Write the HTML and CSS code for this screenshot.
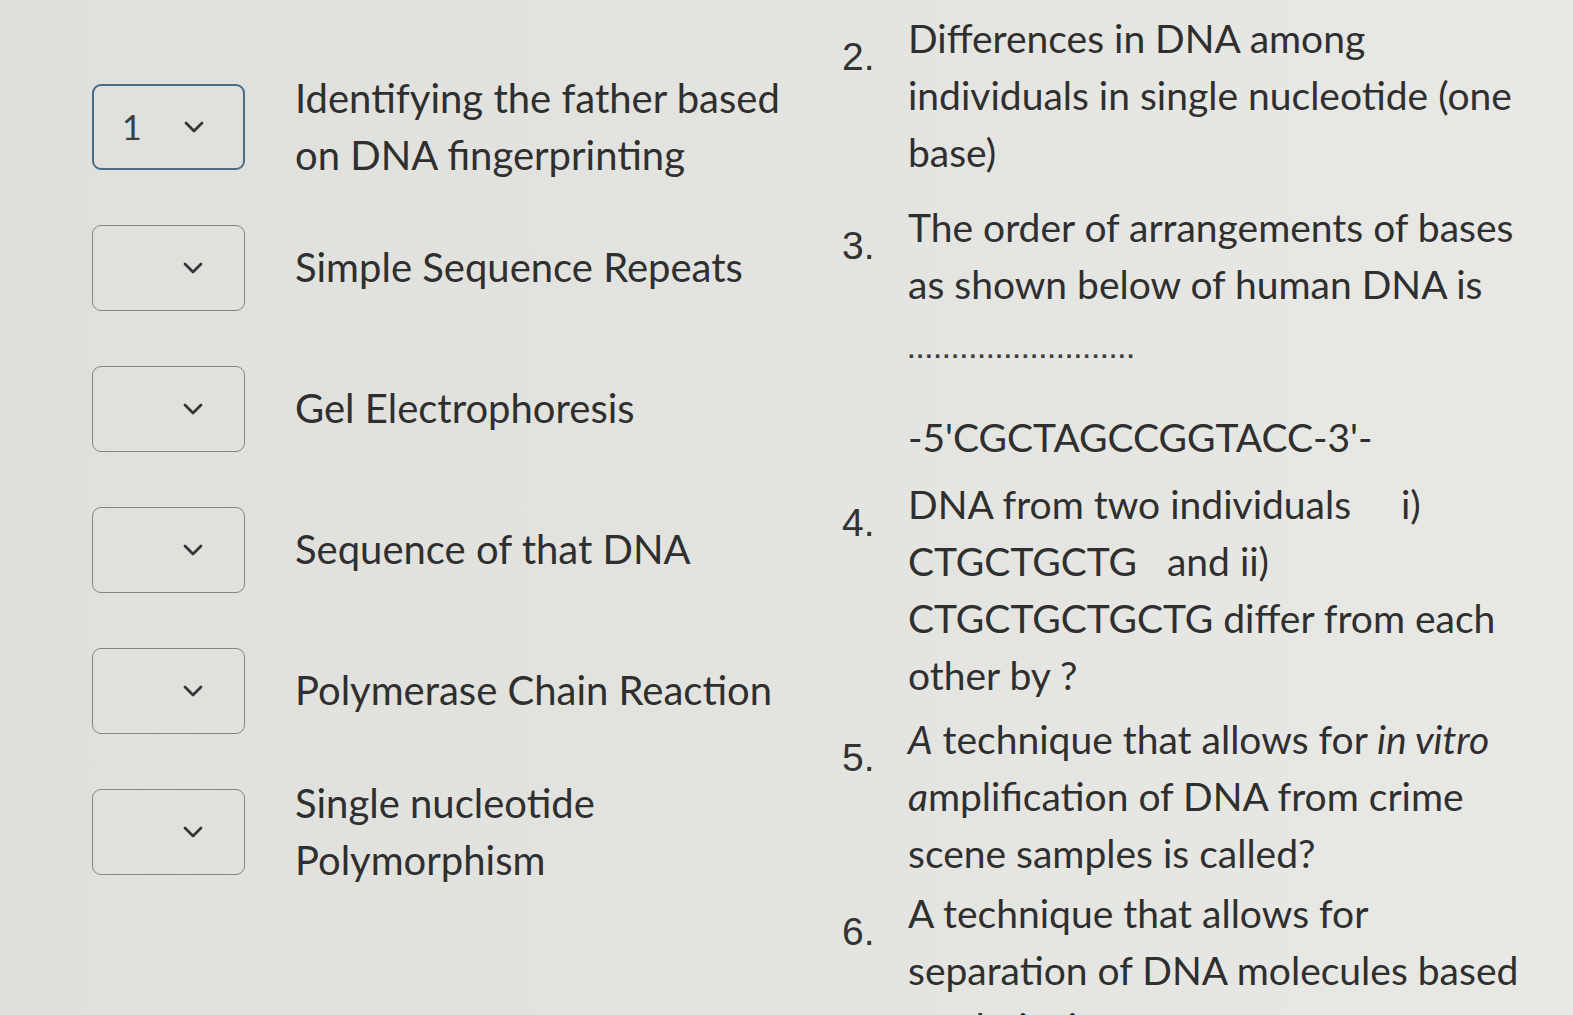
FILE: index.html
```
<!DOCTYPE html>
<html lang="en">
<head>
  <meta charset="UTF-8">
  <title>DNA Technology - Matching</title>
  <link rel="stylesheet" href="styles.css">
</head>
<body>
  <div class="page">
    <div class="matches">
      <div class="match">
        <div class="pick set">
          <span class="pick-value">1</span>
          <svg class="chev" viewBox="0 0 20 12"><path d="M2 2 L10 10 L18 2"/></svg>
        </div>
        <p class="match-text">Identifying the father based<br>on DNA fingerprinting</p>
      </div>
      <div class="match">
        <div class="pick">
          <span class="pick-value"></span>
          <svg class="chev" viewBox="0 0 20 12"><path d="M2 2 L10 10 L18 2"/></svg>
        </div>
        <p class="match-text">Simple Sequence Repeats</p>
      </div>
      <div class="match">
        <div class="pick">
          <span class="pick-value"></span>
          <svg class="chev" viewBox="0 0 20 12"><path d="M2 2 L10 10 L18 2"/></svg>
        </div>
        <p class="match-text">Gel Electrophoresis</p>
      </div>
      <div class="match">
        <div class="pick">
          <span class="pick-value"></span>
          <svg class="chev" viewBox="0 0 20 12"><path d="M2 2 L10 10 L18 2"/></svg>
        </div>
        <p class="match-text">Sequence of that DNA</p>
      </div>
      <div class="match">
        <div class="pick">
          <span class="pick-value"></span>
          <svg class="chev" viewBox="0 0 20 12"><path d="M2 2 L10 10 L18 2"/></svg>
        </div>
        <p class="match-text">Polymerase Chain Reaction</p>
      </div>
      <div class="match">
        <div class="pick">
          <span class="pick-value"></span>
          <svg class="chev" viewBox="0 0 20 12"><path d="M2 2 L10 10 L18 2"/></svg>
        </div>
        <p class="match-text">Single nucleotide<br>Polymorphism</p>
      </div>
    </div>

    <ol class="questions">
      <li class="q">
        <span class="q-num">2.</span>
        <div class="q-text">Differences in DNA among<br>individuals in single nucleotide (one<br>base)</div>
      </li>
      <li class="q q-seq">
        <span class="q-num">3.</span>
        <div class="q-text">
          The order of arrangements of bases<br>as shown below of human DNA is
          <div class="blank">..........................</div>
          <div class="seq">-5'CGCTAGCCGGTACC-3'-</div>
        </div>
      </li>
      <li class="q q-tight">
        <span class="q-num">4.</span>
        <div class="q-text">DNA from two individuals&nbsp;&nbsp;&nbsp;&nbsp; i)<br>CTGCTGCTG&nbsp;&nbsp; and ii)<br>CTGCTGCTGCTG differ from each<br>other by ?</div>
      </li>
      <li class="q q-tighter">
        <span class="q-num">5.</span>
        <div class="q-text"><em>A</em> technique that allows for <em>in vitro</em><br><em>a</em>mplification of DNA from crime<br>scene samples is called?</div>
      </li>
      <li class="q">
        <span class="q-num">6.</span>
        <div class="q-text">A technique that allows for<br>separation of DNA molecules based<br>on their size</div>
      </li>
    </ol>
  </div>
</body>
</html>
```

FILE: styles.css
```
html, body {
  height: 100%;
}
body {
  margin: 0;
  overflow: hidden;
  font-family: Lato, "Open Sans", sans-serif;
  color: #2f2f2f;
  background: linear-gradient(90deg, #dfdfdc 0%, #e3e3e0 50%, #e8e8e5 100%);
}
.page {
  display: flex;
  padding-left: 92px;
}

/* left side: dropdown + term */
.matches {
  width: 746px;
  flex: none;
  padding-top: 56px;
  display: grid;
  grid-auto-rows: 141px;
}
.match {
  display: flex;
  align-items: center;
  gap: 50px;
}
.pick {
  width: 153px;
  height: 86px;
  box-sizing: border-box;
  flex: none;
  border: 1.5px solid #858585;
  border-radius: 9px;
  display: flex;
  align-items: center;
  padding-left: 28px;
}
.pick.set {
  border: 2px solid #4b6a86;
}
.pick-value {
  width: 62px;
  font-size: 34px;
  color: #3c3c3c;
}
.chev {
  width: 20px;
  height: 12px;
  fill: none;
  stroke: #363636;
  stroke-width: 2.8;
  stroke-linecap: round;
  stroke-linejoin: round;
}
.match-text {
  margin: 0;
  font-size: 40px;
  line-height: 57px;
}

/* right side: numbered questions */
.questions {
  list-style: none;
  margin: 0;
  padding: 10px 0 0 4px;
}
.q {
  display: flex;
  margin-bottom: 3px;
}
.q:first-child {
  margin-bottom: 18px;
}
.q-seq {
  margin-bottom: 10px;
}
.q-tight {
  margin-bottom: 7px;
}
.q-tighter {
  margin-bottom: 3px;
}
.q-num {
  width: 66px;
  flex: none;
  padding-top: 18px;
  font-family: "Liberation Sans", Arial, sans-serif;
  font-size: 39px;
  line-height: 57px;
  color: #333;
}
.q-text {
  font-size: 39px;
  line-height: 57px;
}
.q-text em {
  font-style: italic;
}
.blank {
  margin-top: 27px;
  font-family: "Liberation Sans", Arial, sans-serif;
  font-size: 24px;
  font-weight: bold;
  letter-spacing: 2.1px;
  line-height: 20px;
  color: #3d3d3d;
}
.seq {
  margin-top: 49px;
}
```
